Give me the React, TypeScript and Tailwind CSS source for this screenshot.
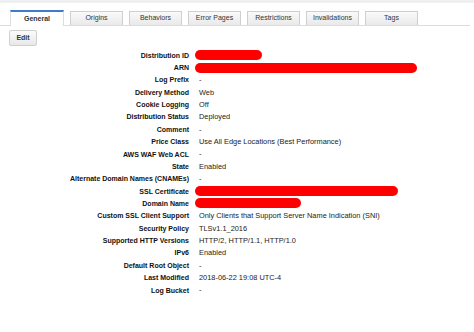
import React from "react";

const tabs = ["General", "Origins", "Behaviors", "Error Pages", "Restrictions", "Invalidations", "Tags"];

type Row = { label: string; value?: string; redact?: number };

const rows: Row[] = [
  { label: "Distribution ID", redact: 67 },
  { label: "ARN", redact: 222 },
  { label: "Log Prefix", value: "-" },
  { label: "Delivery Method", value: "Web" },
  { label: "Cookie Logging", value: "Off" },
  { label: "Distribution Status", value: "Deployed" },
  { label: "Comment", value: "-" },
  { label: "Price Class", value: "Use All Edge Locations (Best Performance)" },
  { label: "AWS WAF Web ACL", value: "-" },
  { label: "State", value: "Enabled" },
  { label: "Alternate Domain Names (CNAMEs)", value: "-" },
  { label: "SSL Certificate", redact: 203 },
  { label: "Domain Name", redact: 106 },
  { label: "Custom SSL Client Support", value: "Only Clients that Support Server Name Indication (SNI)" },
  { label: "Security Policy", value: "TLSv1.1_2016" },
  { label: "Supported HTTP Versions", value: "HTTP/2, HTTP/1.1, HTTP/1.0" },
  { label: "IPv6", value: "Enabled" },
  { label: "Default Root Object", value: "-" },
  { label: "Last Modified", value: "2018-06-22 19:08 UTC-4" },
  { label: "Log Bucket", value: "-" },
];

export default function App() {
  return (
    <div
      className="w-[474px] h-[332px] bg-white overflow-hidden relative"
      style={{ fontFamily: '"Liberation Sans", Arial, sans-serif' }}
    >
      <div className="h-[3px] bg-[#eef0f2]" />
      <div className="flex items-end gap-[6px] pl-[10px] pt-[7px] border-b border-[#dcdcdc] mr-[4px]">
        {tabs.map((t, i) =>
          i === 0 ? (
            <div
              key={t}
              className="w-[54px] h-[16px] flex items-center justify-center text-[7px] font-bold text-[#333] bg-white border-t-2 border-t-[#3d7cc9] border-x border-x-[#ddd] -mb-px"
            >
              {t}
            </div>
          ) : (
            <div
              key={t}
              className="w-[53px] h-[14px] flex items-center justify-center text-[7px] text-[#333] bg-gradient-to-b from-[#fafafa] to-[#e9e9e9] border border-[#cfcfcf] border-b-0"
            >
              {t}
            </div>
          )
        )}
      </div>
      <div className="pl-[9px] pt-[4px]">
        <div className="w-[28px] h-[16px] flex items-center justify-center text-[7px] font-bold text-[#333] bg-gradient-to-b from-[#fbfbfb] to-[#e8e8e8] border border-[#cfcfcf] rounded-[2px]">
          Edit
        </div>
      </div>
      <div className="flex flex-col pt-[3px]">
        {rows.map((r) => (
          <div key={r.label} className="flex items-center h-[12.37px]">
            <div className="w-[189px] text-right text-[7px] font-bold text-[#111] leading-none whitespace-nowrap">
              {r.label}
            </div>
            <div className="pl-[10px] flex items-center">
              {r.redact ? (
                <div className="-ml-[4px] h-[10px] rounded-full bg-[#ff0000]" style={{ width: r.redact }} />
              ) : (
                <span className="text-[7.4px] text-[#222] leading-none whitespace-nowrap">{r.value}</span>
              )}
            </div>
          </div>
        ))}
      </div>
    </div>
  );
}
